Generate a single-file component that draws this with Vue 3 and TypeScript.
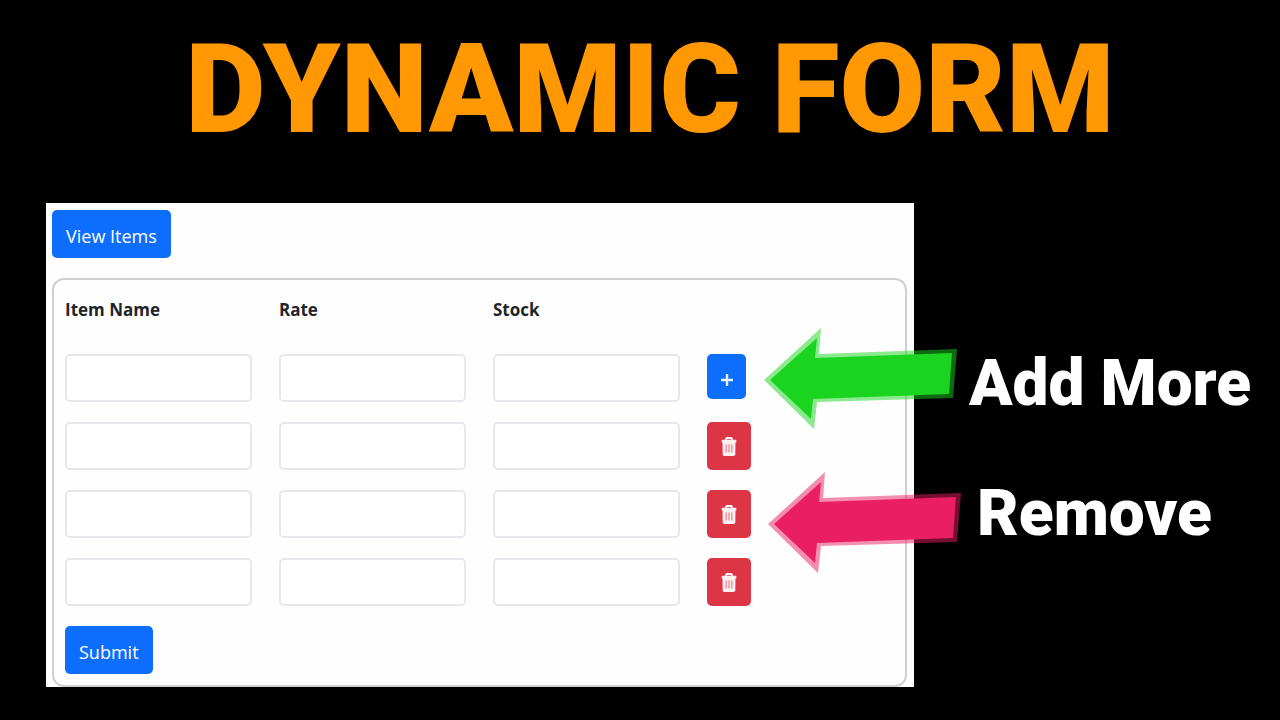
<script setup lang="ts">
import { ref } from 'vue'

interface ItemRow {
  id: number
  name: string
  rate: string
  stock: string
}

const fields = [
  { key: 'name', label: 'Item Name' },
  { key: 'rate', label: 'Rate' },
  { key: 'stock', label: 'Stock' },
] as const

const blankRow = (id: number): ItemRow => ({ id, name: '', rate: '', stock: '' })

const nextId = ref(5)
const rows = ref<ItemRow[]>([1, 2, 3, 4].map(blankRow))

function addRow(): void {
  rows.value.push(blankRow(nextId.value++))
}

function removeRow(id: number): void {
  rows.value = rows.value.filter((row) => row.id !== id)
}

const callouts = [
  { text: 'Add More', kind: 'more' },
  { text: 'Remove', kind: 'remove' },
]
</script>

<template>
  <main class="page">
    <h1 class="title">DYNAMIC FORM</h1>
    <div class="stage">
      <section class="panel">
        <button type="button" class="btn primary">View Items</button>
        <form class="card" @submit.prevent>
          <div class="row head">
            <span v-for="field in fields" :id="`head-${field.key}`" :key="field.key">{{ field.label }}</span>
          </div>
          <div v-for="(row, index) in rows" :key="row.id" class="row">
            <input
              v-for="field in fields"
              :key="field.key"
              v-model="row[field.key]"
              type="text"
              class="field"
              :aria-labelledby="`head-${field.key}`"
            />
            <button v-if="index === 0" type="button" class="btn primary add" aria-label="Add row" @click="addRow">
              <svg width="12" height="12" viewBox="0 0 12 12" aria-hidden="true">
                <path d="M6 0V12M0 6H12" stroke="#e8f2ff" stroke-width="2.400" />
              </svg>
            </button>
            <button v-else type="button" class="btn danger" aria-label="Remove row" @click="removeRow(row.id)">
              <svg width="16" height="20" viewBox="0 0 16 20" aria-hidden="true">
                <path d="M5 3.500V2.200Q5 1 6.200 1H9.800Q11 1 11 2.200V3.500" fill="none" stroke="#fff" stroke-width="1.800" />
                <path d="M1.500 2.800H14.500Q15.300 2.800 15.300 3.600V5.500H0.700V3.600Q0.700 2.800 1.500 2.800Z" fill="#fdf0f1" />
                <path d="M1.500 5H14.500L14.300 17.300Q14.200 19 12.600 19H3.400Q1.800 19 1.700 17.300Z" fill="#fdf0f1" />
                <path d="M5.200 7.500V15.500M8 7.500V15.500M10.800 7.500V15.500" stroke="#dc3545" stroke-opacity="0.6" stroke-width="1.200" />
              </svg>
            </button>
          </div>
          <button type="submit" class="btn primary">Submit</button>
        </form>
      </section>
      <aside class="callouts">
        <div v-for="callout in callouts" :key="callout.kind" class="callout" :class="callout.kind">
          <svg class="arrow" width="193" height="101" viewBox="0 0 193 101" aria-hidden="true">
            <polygon points="0,52 57,0 55,26 193,21 189,70 53,74 50,101" fill="currentColor" fill-opacity="0.5" />
            <polygon points="6,52 53,10 51,30 188,25 185,66 49,71 47,91" fill="currentColor" />
          </svg>
          <span class="label">{{ callout.text }}</span>
        </div>
      </aside>
    </div>
  </main>
</template>

<style>
body {
  margin: 0;
  background: #000;
}
</style>

<style scoped>
* {
  box-sizing: border-box;
}

.page {
  min-height: 100vh;
  background: #000;
  font-family: "Open Sans", "Noto Sans", sans-serif;
}

.title {
  margin: 0;
  padding: 30px 0 53px 20px;
  color: #ff9803;
  font: 900 124px/120px Roboto, "Liberation Sans", sans-serif;
  text-align: center;
  white-space: nowrap;
}

.stage {
  display: grid;
  grid-template-columns: minmax(0, 1fr) 366px;
  padding-left: 46px;
}

.panel {
  display: flex;
  flex-direction: column;
  align-items: flex-start;
  gap: 20px;
  padding: 7px 7px 0 6px;
  background: #fefefe;
}

.card {
  display: flex;
  flex-direction: column;
  align-items: flex-start;
  gap: 20px;
  width: 100%;
  padding: 14px 11px 11px;
  border: 2px solid #d0d0d0;
  border-radius: 12px;
}

.row {
  display: grid;
  grid-template-columns: repeat(4, minmax(0, 1fr));
  gap: 27px;
  align-items: start;
  width: 100%;
  height: 48px;
}

.head {
  height: 40px;
  color: #212529;
  font-size: 17px;
  font-weight: 700;
  line-height: 32px;
}

.field {
  width: 100%;
  height: 48px;
  padding: 0 12px;
  border: 2px solid #e6e8eb;
  border-radius: 5px;
  background: #fff;
  color: #212529;
  font: inherit;
  font-size: 18px;
}

.btn {
  display: flex;
  align-items: center;
  justify-content: center;
  height: 48px;
  padding: 4px 14px 0;
  border: 0;
  border-radius: 5px;
  color: #fff;
  font: inherit;
  font-size: 18px;
  cursor: pointer;
}

.primary {
  background: #0d6efd;
}

.danger {
  width: 44px;
  padding: 2px 0 0;
  background: #dc3545;
}

.add {
  width: 39px;
  height: 45px;
  padding: 6px 0 0;
}

.callouts {
  display: flex;
  flex-direction: column;
  gap: 43px;
  margin-left: -150px;
  padding-top: 125px;
}

.callout {
  display: flex;
  align-items: center;
  gap: 12px;
  height: 101px;
}

.more {
  color: #1bd41f;
}

.remove {
  gap: 16px;
  padding-left: 4px;
  color: #e91e63;
}

.arrow {
  flex: none;
}

.label {
  color: #fff;
  font: 900 64px/72px Roboto, "Liberation Sans", sans-serif;
  white-space: nowrap;
}

.more .label {
  padding-top: 10px;
}

.remove .label {
  padding-bottom: 18px;
}
</style>
